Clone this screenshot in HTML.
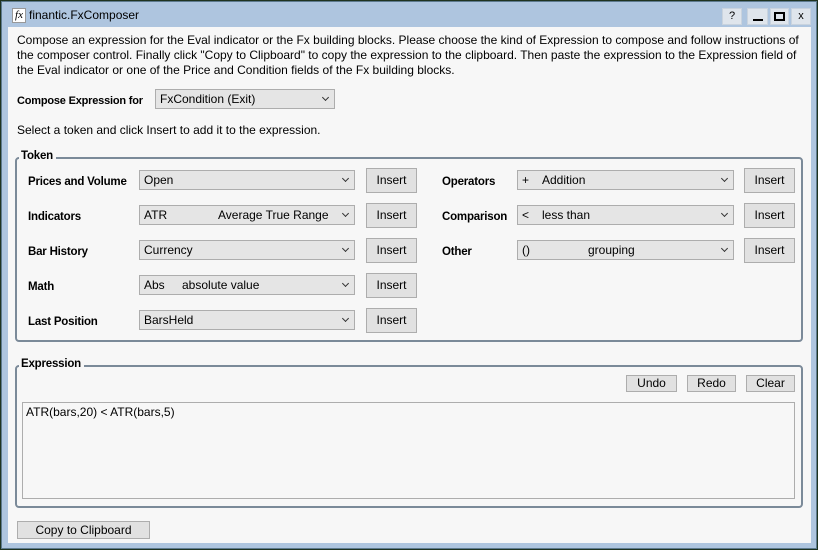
<!DOCTYPE html>
<html><head><meta charset="utf-8"><style>
*{margin:0;padding:0;box-sizing:border-box}
body{width:818px;height:550px;background:#1f3320;font-family:"Liberation Sans",sans-serif;font-size:12px;color:#000;position:relative;overflow:hidden}
.frame{position:absolute;left:1px;top:1px;width:816px;height:548px;background:#aec5df;border:1px solid #5d7a8e}
.client{position:absolute;left:8px;top:27px;width:803px;height:516px;background:#f7f7f7}
.a{position:absolute;white-space:nowrap}
.b{font-weight:bold;font-size:11.5px;letter-spacing:-0.2px;margin-top:2px}
.cb{position:absolute;height:20px;background:#e5e5e5;border:1px solid #adadad;padding-left:4px;line-height:19px;white-space:nowrap}
.cb:after{content:"";position:absolute;right:6px;top:5px;width:4px;height:4px;border-right:1.3px solid #333;border-bottom:1.3px solid #333;transform:rotate(45deg)}
.btn{position:absolute;background:#e1e1e1;border:1px solid #adadad;text-align:center;white-space:nowrap}
.grp{position:absolute;border:2px solid #7b8a99;border-radius:4px}
.lg{position:absolute;background:#f7f7f7;font-weight:bold;padding:0 3px 0 2px;line-height:14px;font-size:11.5px;letter-spacing:-0.2px}
.tb{position:absolute;top:8px;height:17px;background:#dfe5ec;border:1px solid #c9d3de;text-align:center;font-size:11px;line-height:15px}
</style></head><body>
<div class="frame"></div>
<div class="a" style="left:12px;top:8px;width:14px;height:15px;background:#fff;border:1px solid #999;font-family:'Liberation Serif',serif;font-style:italic;font-size:11px;line-height:12px;text-align:center">fx</div>
<div class="a" style="left:29px;top:8px;font-size:12px">finantic.FxComposer</div>
<div class="tb" style="left:722px;width:20px">?</div>
<div class="tb" style="left:747px;width:21px"><div style="position:absolute;left:5px;top:10px;width:10px;height:2px;background:#000"></div></div>
<div class="tb" style="left:770px;width:19px"><div style="position:absolute;left:3px;top:3px;width:11px;height:9px;border:2.5px solid #000"></div></div>
<div class="tb" style="left:791px;width:20px">x</div>
<div class="client"></div>
<div class="a" style="left:17px;top:33px;line-height:15px;font-size:12px">Compose an expression for the Eval indicator or the Fx building blocks. Please choose the kind of Expression to compose and follow instructions of<br>the composer control. Finally click "Copy to Clipboard" to copy the expression to the clipboard. Then paste the expression to the Expression field of<br>the Eval indicator or one of the Price and Condition fields of the Fx building blocks.</div>
<div class="a b" style="left:17px;top:93px;font-size:11px">Compose Expression for</div>
<div class="cb" style="left:155px;top:89px;width:180px">FxCondition (Exit)</div>
<div class="a" style="left:17px;top:123px">Select a token and click Insert to add it to the expression.</div>

<div class="grp" style="left:15px;top:157px;width:788px;height:185px"></div>
<div class="lg" style="left:19px;top:149px">Token</div>
<div class="a b" style="left:28px;top:174px">Prices and Volume</div>
<div class="cb" style="left:139px;top:170px;width:216px">Open</div>
<div class="btn" style="left:366px;top:168px;width:51px;height:25px;line-height:23px">Insert</div>
<div class="a b" style="left:28px;top:209px">Indicators</div>
<div class="cb" style="left:139px;top:205px;width:216px">ATR<span style="position:absolute;left:78px">Average True Range</span></div>
<div class="btn" style="left:366px;top:203px;width:51px;height:25px;line-height:23px">Insert</div>
<div class="a b" style="left:28px;top:244px">Bar History</div>
<div class="cb" style="left:139px;top:240px;width:216px">Currency</div>
<div class="btn" style="left:366px;top:238px;width:51px;height:25px;line-height:23px">Insert</div>
<div class="a b" style="left:28px;top:279px">Math</div>
<div class="cb" style="left:139px;top:275px;width:216px">Abs<span style="position:absolute;left:42px">absolute value</span></div>
<div class="btn" style="left:366px;top:273px;width:51px;height:25px;line-height:23px">Insert</div>
<div class="a b" style="left:28px;top:314px">Last Position</div>
<div class="cb" style="left:139px;top:310px;width:216px">BarsHeld</div>
<div class="btn" style="left:366px;top:308px;width:51px;height:25px;line-height:23px">Insert</div>

<div class="a b" style="left:442px;top:174px">Operators</div>
<div class="cb" style="left:517px;top:170px;width:217px">+<span style="position:absolute;left:24px">Addition</span></div>
<div class="btn" style="left:744px;top:168px;width:51px;height:25px;line-height:23px">Insert</div>
<div class="a b" style="left:442px;top:209px">Comparison</div>
<div class="cb" style="left:517px;top:205px;width:217px">&lt;<span style="position:absolute;left:24px">less than</span></div>
<div class="btn" style="left:744px;top:203px;width:51px;height:25px;line-height:23px">Insert</div>
<div class="a b" style="left:442px;top:244px">Other</div>
<div class="cb" style="left:517px;top:240px;width:217px">()<span style="position:absolute;left:70px">grouping</span></div>
<div class="btn" style="left:744px;top:238px;width:51px;height:25px;line-height:23px">Insert</div>

<div class="grp" style="left:15px;top:365px;width:788px;height:143px"></div>
<div class="lg" style="left:19px;top:357px">Expression</div>
<div class="btn" style="left:626px;top:375px;width:51px;height:17px;line-height:15px">Undo</div>
<div class="btn" style="left:687px;top:375px;width:49px;height:17px;line-height:15px">Redo</div>
<div class="btn" style="left:746px;top:375px;width:49px;height:17px;line-height:15px">Clear</div>
<div class="a" style="left:22px;top:402px;width:773px;height:97px;border:1px solid #adadad;background:#f7f7f7;padding:2px 3px">ATR(bars,20) &lt; ATR(bars,5)</div>
<div class="btn" style="left:17px;top:521px;width:133px;height:18px;line-height:16px">Copy to Clipboard</div>
</body></html>
